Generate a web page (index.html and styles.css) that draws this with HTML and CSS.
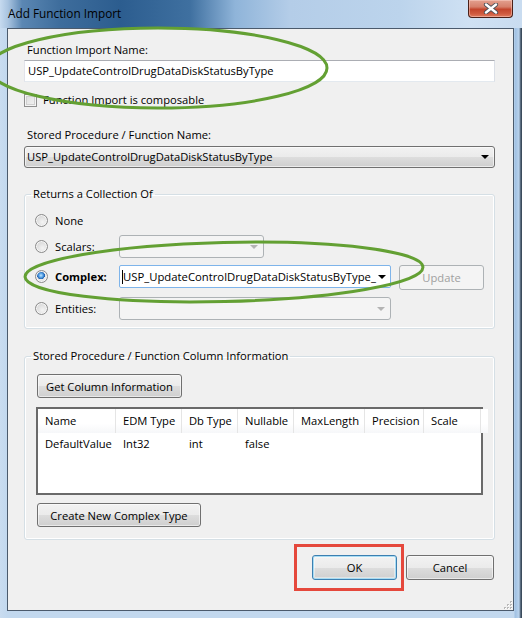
FILE: index.html
```html
<!DOCTYPE html>
<html>
<head>
<meta charset="utf-8">
<title>Add Function Import</title>
<link rel="stylesheet" href="styles.css">
</head>
<body>
<div class="window">
  <div class="titlebar">
    <span class="title">Add Function Import</span>
    <div class="close">
      <svg width="16" height="11" viewBox="0 0 16 11">
        <path d="M3 1.5 L13 9.5 M13 1.5 L3 9.5" stroke="#4a4f57" stroke-width="4.2" stroke-linecap="round"/>
        <path d="M3 1.5 L13 9.5 M13 1.5 L3 9.5" stroke="#ffffff" stroke-width="2.4" stroke-linecap="round"/>
      </svg>
    </div>
  </div>
  <div class="client">
    <div class="label l1">Function Import Name:</div>
    <div class="textbox">USP_UpdateControlDrugDataDiskStatusByType</div>
    <div class="check-row"><span class="checkbox"></span><span>Function Import is composable</span></div>
    <div class="label l2">Stored Procedure / Function Name:</div>
    <div class="combo combo-main"><span class="combo-text">USP_UpdateControlDrugDataDiskStatusByType</span><span class="arrow"></span></div>

    <fieldset class="group g1">
      <legend>Returns a Collection Of</legend>
      <div class="opt o-none"><div class="opt-label short"><span class="radio"></span><span>None</span></div></div>
      <div class="opt"><div class="opt-label"><span class="radio"></span><span>Scalars:</span></div><div class="combo disabled w-scalar"><span class="combo-text"></span><span class="arrow"></span></div></div>
      <div class="opt"><div class="opt-label bold"><span class="radio checked"></span><span>Complex:</span></div><div class="combo edit w-wide"><span class="combo-text"><span class="caret"></span>USP_UpdateControlDrugDataDiskStatusByType_</span><span class="arrow"></span></div><div class="btn disabled update">Update</div></div>
      <div class="opt"><div class="opt-label"><span class="radio"></span><span>Entities:</span></div><div class="combo disabled w-wide"><span class="combo-text"></span><span class="arrow"></span></div></div>
    </fieldset>

    <fieldset class="group g2">
      <legend>Stored Procedure / Function Column Information</legend>
      <div class="btn get">Get Column Information</div>
      <div class="listview">
        <div class="lv-row lv-head">
          <div class="c">Name</div><div class="c">EDM Type</div><div class="c">Db Type</div><div class="c">Nullable</div><div class="c">MaxLength</div><div class="c">Precision</div><div class="c">Scale</div><div class="c last"></div>
        </div>
        <div class="lv-row lv-data">
          <div class="c">DefaultValue</div><div class="c">Int32</div><div class="c">int</div><div class="c">false</div><div class="c"></div><div class="c"></div><div class="c"></div><div class="c last"></div>
        </div>
      </div>
      <div class="btn create">Create New Complex Type</div>
    </fieldset>

    <div class="dlg-buttons">
      <div class="btn ok">OK</div>
      <div class="btn cancel">Cancel</div>
    </div>

    <svg class="grip" width="9" height="9" viewBox="0 0 9 9">
      <g fill="#b8b8b8">
        <rect x="7" y="1" width="2" height="2"/>
        <rect x="4" y="4" width="2" height="2"/><rect x="7" y="4" width="2" height="2"/>
        <rect x="1" y="7" width="2" height="2"/><rect x="4" y="7" width="2" height="2"/><rect x="7" y="7" width="2" height="2"/>
      </g>
      <g fill="#ffffff">
        <rect x="8" y="2" width="1" height="1"/>
        <rect x="5" y="5" width="1" height="1"/><rect x="8" y="5" width="1" height="1"/>
        <rect x="2" y="8" width="1" height="1"/><rect x="5" y="8" width="1" height="1"/><rect x="8" y="8" width="1" height="1"/>
      </g>
    </svg>
  </div>

  <svg class="annot" width="522" height="618" viewBox="0 0 522 618">
    <ellipse cx="158" cy="68" rx="169" ry="40" fill="none" stroke="#63a033" stroke-width="3"/>
    <ellipse cx="224" cy="272" rx="199" ry="29.5" transform="rotate(-1.4 224 272)" fill="none" stroke="#63a033" stroke-width="3"/>
    <rect x="295.5" y="545.5" width="107" height="44" fill="none" stroke="#e5483c" stroke-width="3"/>
  </svg>
</div>
</body>
</html>
```

FILE: styles.css
```css
* { box-sizing: border-box; }
html, body { margin: 0; padding: 0; }
body {
  width: 522px;
  height: 618px;
  overflow: hidden;
  font-family: "Open Sans", "Noto Sans", sans-serif;
  font-size: 11.2px;
  color: #000;
}

.window {
  position: relative;
  width: 522px;
  height: 618px;
  background:
    linear-gradient(90deg, #c9dcf0 0, #c2d8ee 7px, #c2d8ee 514px, #9fc0e2 515px, #b9d2ec 519px, #3b4b5c 521px);
}

.titlebar {
  display: flex;
  align-items: flex-start;
  height: 28px;
  padding-left: 8px;
  background: linear-gradient(90deg, #c6daef 0, #a9c4e0 8px, #5b87b3 22px, #3e6d9c 60px, #2c5d8f 120px, #3f70a0 190px, #8fb4d9 235px, #b4cde8 290px, #bcd4ec 400px, #cfe1f3 470px, #c9dcf0 522px);
}
.title {
  margin-top: 5px;
  line-height: 16px;
  font-size: 11.8px;
}
.close {
  margin-left: auto;
  margin-right: 9px;
  width: 45px;
  height: 18px;
  border: 1px solid #4a2018;
  border-top: none;
  border-radius: 0 0 4px 4px;
  background: linear-gradient(#e3a08f 0, #d6806b 40%, #c3452c 55%, #cf5a3e 80%, #e07a5d 100%);
  box-shadow: inset 0 0 0 1px rgba(255, 220, 210, 0.45);
  display: flex;
  align-items: center;
  justify-content: center;
}

.client {
  position: relative;
  margin-left: 7px;
  width: 507px;
  height: 583px;
  border: 1px solid #4b5a6c;
  background: #f0f0f0;
  padding: 0 18px 0 16px;
  display: flex;
  flex-direction: column;
}

.label {
  line-height: 16px;
  padding-left: 3px;
}
.l1 { margin-top: 13px; }
.l2 { margin-top: 20px; }

.textbox {
  margin-top: 2px;
  height: 22px;
  background: #fff;
  border: 1px solid;
  border-color: #abadb3 #dbdfe6 #e3e9ef #e2e3ea;
  padding-left: 3px;
  line-height: 20px;
  white-space: nowrap;
}

.check-row {
  margin-top: 11px;
  height: 14px;
  display: flex;
  align-items: center;
  gap: 6px;
  line-height: 14px;
}
.checkbox {
  width: 13px;
  height: 13px;
  border: 1px solid #8f8f8f;
  background: linear-gradient(135deg, #dcdcdc, #f4f4f4);
  box-shadow: inset 0 0 0 1px #f4f4f4, inset 0 0 0 2px #d0d0d0;
}

.combo {
  position: relative;
  height: 22px;
  display: flex;
  align-items: center;
  border: 1px solid #707070;
  border-radius: 3px;
  background: linear-gradient(#f2f2f2 0, #ebebeb 50%, #dddddd 51%, #cfcfcf 100%);
  box-shadow: inset 0 0 0 1px rgba(255, 255, 255, 0.6);
}
.combo-main { margin-top: 3px; }
.combo-text {
  flex: 1;
  padding-left: 2px;
  white-space: nowrap;
  overflow: hidden;
  line-height: 18px;
}
.arrow {
  flex: none;
  width: 0;
  height: 0;
  margin-right: 5px;
  border-left: 4px solid transparent;
  border-right: 4px solid transparent;
  border-top: 4px solid #000;
}
.combo.disabled {
  border-color: #adb2b5;
  background: #f4f4f4;
  box-shadow: none;
  height: 23px;
}
.combo.disabled .arrow { border-top-color: #b4b4b4; }
.combo.edit {
  background: #fff;
  border-color: #7eb4ea;
  border-radius: 2px;
  box-shadow: none;
  height: 23px;
}
.combo.edit .combo-text { padding-left: 2px; font-size: 11.3px; }
.combo.edit .arrow { margin-right: 4px; }
.caret {
  display: inline-block;
  width: 1px;
  height: 14px;
  background: #000;
  vertical-align: -3px;
}
.w-scalar { width: 145px; }
.w-wide { width: 272px; }

.group {
  margin: 0;
  padding: 0;
  min-width: 0;
  border: 1px solid #d5dfe5;
  border-radius: 3px;
  box-shadow: inset 0 0 0 1px #ffffff;
}
.group legend {
  padding: 0 2px;
  line-height: 16px;
}
.g1 {
  margin-top: 18px;
  padding: 0 0 8px 10px;
}
.g1 legend { margin-left: -4px; }
.g2 {
  margin-top: 19px;
  padding: 0 12px 12px 11px;
}
.g2 legend { margin-left: -5px; }

.opt {
  display: flex;
  align-items: flex-start;
  margin-top: 7px;
}
.o-none { margin-top: 10px; }
.opt-label {
  width: 84px;
  height: 23px;
  display: flex;
  align-items: center;
  gap: 7px;
}
.opt-label.short { height: 16px; }
.opt-label.bold { font-weight: bold; }

.radio {
  flex: none;
  width: 13px;
  height: 13px;
  border-radius: 50%;
  border: 1px solid #8a8a8a;
  background: radial-gradient(circle at 60% 65%, #f4f4f4 0, #e2e2e2 45%, #cdcdcd 100%);
  box-shadow: inset 0 0 0 1px #f6f6f6;
}
.radio.checked {
  background:
    radial-gradient(circle at 45% 40%, #c5e5ff 0, #5aa6e8 22%, #1f5fae 42%, transparent 46%),
    radial-gradient(circle, #f4f4f4 0, #d8d8d8 100%);
}

.btn {
  height: 24px;
  display: flex;
  align-items: center;
  justify-content: center;
  border: 1px solid #707070;
  border-radius: 3px;
  background: linear-gradient(#f2f2f2 0, #ebebeb 50%, #dddddd 51%, #cfcfcf 100%);
  box-shadow: inset 0 0 0 1px rgba(255, 255, 255, 0.55);
  white-space: nowrap;
}
.btn.disabled {
  border-color: #adb2b5;
  background: #f4f4f4;
  color: #a0a0a0;
  box-shadow: none;
}
.update {
  margin-left: 8px;
  width: 85px;
  height: 25px;
}
.get {
  margin-top: 10px;
  margin-left: 1px;
  width: 145px;
}
.create {
  margin-top: 8px;
  margin-left: 1px;
  width: 164px;
}

.listview {
  margin-top: 9px;
  width: 447px;
  height: 88px;
  border: 2px solid #6a6a6a;
  background: #fff;
}
.lv-row {
  display: grid;
  grid-template-columns: 78px 66px 56px 56px 71px 59px 57px 1fr;
}
.lv-head {
  height: 24px;
  line-height: 24px;
}
.lv-data {
  height: 22px;
  line-height: 22px;
}
.lv-head .c {
  border-right: 1px solid #e5e5e5;
  background: linear-gradient(#ffffff 0, #ffffff 60%, #f6f7f9 100%);
}
.lv-head .c.last { border-right: none; }
.c {
  padding-left: 7px;
  white-space: nowrap;
  overflow: hidden;
}

.dlg-buttons {
  margin-top: 15px;
  display: flex;
  justify-content: flex-end;
  gap: 9px;
  margin-right: 1px;
}
.ok, .cancel { height: 25px; }
.ok {
  width: 85px;
  border-color: #3c7fb1;
  box-shadow: inset 0 0 0 1px #a8dcf3, inset 0 0 0 2px rgba(255, 255, 255, 0.4);
}
.cancel { width: 88px; }

.grip {
  position: absolute;
  right: 1px;
  bottom: 1px;
}

.annot {
  position: absolute;
  left: 0;
  top: 0;
  pointer-events: none;
}
```
